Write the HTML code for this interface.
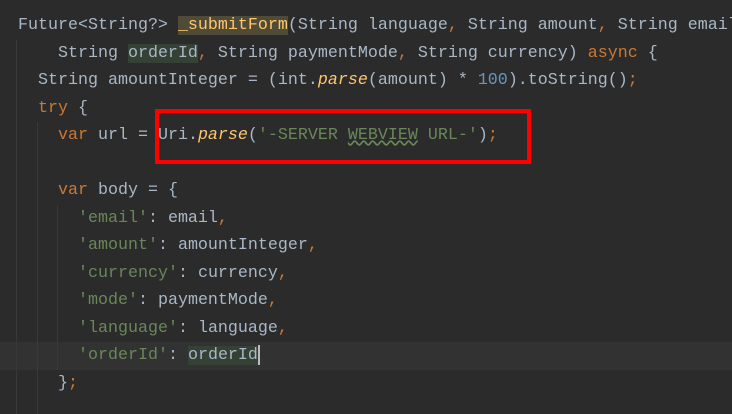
<!DOCTYPE html>
<html><head><style>
body{margin:0;width:732px;height:414px;background:#2b2b2b;overflow:hidden;position:relative;font-family:"Liberation Mono","DejaVu Sans Mono",monospace;font-size:16.67px;color:#a9b7c6}
.l{position:absolute;left:18px;height:27.5px;line-height:27.5px;white-space:pre}
.k{color:#cc7832}.s{color:#6a8759}.n{color:#6897bb}.f{color:#ffc66d;font-style:italic}
.cur{position:absolute;left:0;width:732px;top:342px;height:28px;background:#323232}
.g{position:absolute;width:1px;background:#393939}
.box{position:absolute;left:155px;top:109px;width:368px;height:47px;border:4px solid #ff0000}
</style></head><body>
<div class="cur"></div>
<div class="g" style="left:16px;top:40px;height:374px"></div>
<div class="g" style="left:37px;top:122px;height:292px"></div>
<div class="g" style="left:57px;top:205px;height:165px"></div>
<div class="l" style="top:12px">Future&lt;String?&gt; <span style="color:#ffc66d;background:#4f4b36">_submitForm</span>(String language<span class="k">,</span> String amount<span class="k">,</span> String email<span class="k">,</span></div>
<div class="l" style="top:39.5px">    String <span style="background:#344134">orderId</span><span class="k">,</span> String paymentMode<span class="k">,</span> String currency) <span class="k">async</span> {</div>
<div class="l" style="top:67px">  String amountInteger = (int.<span class="f">parse</span>(amount) * <span class="n">100</span>).toString()<span class="k">;</span></div>
<div class="l" style="top:94.5px">  <span class="k">try</span> {</div>
<div class="l" style="top:122px">    <span class="k">var</span> url = Uri.<span class="f">parse</span>(<span class="s">'-SERVER <span style="text-decoration:underline wavy #6a8759">WEBVIEW</span> URL-'</span>)<span class="k">;</span></div>
<div class="l" style="top:177px">    <span class="k">var</span> body = {</div>
<div class="l" style="top:204.5px">      <span class="s">'email'</span>: email<span class="k">,</span></div>
<div class="l" style="top:232px">      <span class="s">'amount'</span>: amountInteger<span class="k">,</span></div>
<div class="l" style="top:259.5px">      <span class="s">'currency'</span>: currency<span class="k">,</span></div>
<div class="l" style="top:287px">      <span class="s">'mode'</span>: paymentMode<span class="k">,</span></div>
<div class="l" style="top:314.5px">      <span class="s">'language'</span>: language<span class="k">,</span></div>
<div class="l" style="top:342px">      <span class="s">'orderId'</span>: <span style="background:#344134">orderId</span><span style="display:inline-block;width:2px;height:20px;background:#bbbbbb;vertical-align:middle"></span></div>
<div class="l" style="top:369.5px">    }<span class="k">;</span></div>
<div class="box"></div>
</body></html>
